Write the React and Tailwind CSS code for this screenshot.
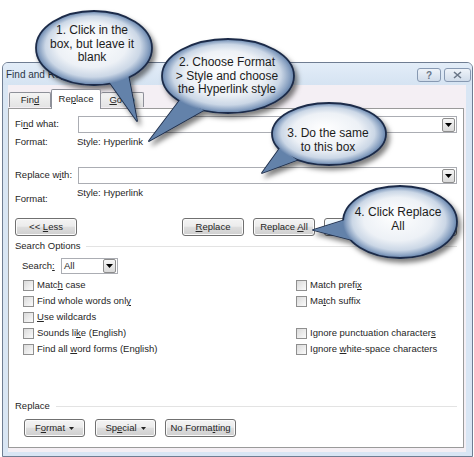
import React from 'react'

const bubbles = [
    { id: 'b1', cx: 94, cy: 48, rx: 58, ry: 37, tail: '108,80 128,74 137,121', tx: 92, y0: 34, lines: ['1. Click in the', 'box, but leave it', 'blank'] },
    { id: 'b2', cx: 228, cy: 76, rx: 66, ry: 37, tail: '180,100 204,110 149,141', tx: 227, y0: 66, lines: ['2. Choose Format', '> Style and choose', 'the Hyperlink style'] },
    { id: 'b3', cx: 329, cy: 134, rx: 57, ry: 31, tail: '280,148 297,160 262,173', tx: 328, y0: 137, lines: ['3. Do the same', 'to this box'] },
    { id: 'b4', cx: 400, cy: 222, rx: 57, ry: 36, tail: '348,219 352,240 313,230', tx: 398, y0: 216, lines: ['4. Click Replace', 'All'] },
]

function Callouts() {
    return (
        <svg className="absolute inset-0 pointer-events-none" width="474" height="457" viewBox="0 0 474 457">
            <defs>
                <filter id="shade" x="-20%" y="-20%" width="150%" height="150%">
                    <feDropShadow dx="3" dy="4" stdDeviation="2.5" floodColor="#000" floodOpacity="0.5" />
                </filter>
                {bubbles.map(b => (
                    <radialGradient key={b.id} id={`g-${b.id}`} gradientUnits="userSpaceOnUse" cx="0" cy="0" r="1" fx="-0.1" fy="-0.2"
                        gradientTransform={`translate(${b.cx} ${b.cy}) scale(${b.rx} ${b.ry})`}>
                        <stop offset="0" stopColor="#ffffff" />
                        <stop offset="0.6" stopColor="#edf1f6" />
                        <stop offset="0.82" stopColor="#cbd7e6" />
                        <stop offset="0.94" stopColor="#8aa2c2" />
                        <stop offset="1" stopColor="#6482aa" />
                    </radialGradient>
                ))}
            </defs>
            {bubbles.map(b => (
                <g key={b.id}>
                    <g filter="url(#shade)">
                        <polygon points={b.tail} fill={`url(#g-${b.id})`} stroke="#1c2c48" strokeWidth="1.8" strokeLinejoin="round" />
                        <ellipse cx={b.cx} cy={b.cy} rx={b.rx} ry={b.ry} fill={`url(#g-${b.id})`} stroke="#1c2c48" strokeWidth="1.8" />
                        <polygon points={b.tail} fill={`url(#g-${b.id})`} />
                    </g>
                    <text x={b.tx} textAnchor="middle" fontFamily="'Liberation Sans', Arial, sans-serif" fontSize="12" fill="#1c1c1c">
                        {b.lines.map((l, i) => (
                            <tspan key={i} x={b.tx} y={b.y0 + i * 13.5}>{l}</tspan>
                        ))}
                    </text>
                </g>
            ))}
        </svg>
    )
}

function Btn({ children, className = '' }) {
    return (
        <div className={`h-[18px] flex items-center justify-center gap-[4px] rounded-[3px] border border-[#707070]
            bg-[linear-gradient(#f4f4f4_0%,#ececec_45%,#dddddd_52%,#cfcfcf_100%)] shadow-[inset_0_0_0_1px_#fbfbfb] ${className}`}>
            {children}
        </div>
    )
}

function Caret() {
    return (
        <svg width="5" height="3" viewBox="0 0 5 3"><path d="M0 0h5L2.5 3z" fill="#222" /></svg>
    )
}

function DropBtn() {
    return (
        <div className="w-[13px] h-[14px] flex items-center justify-center border border-[#8d8d8d] rounded-[2px] bg-[linear-gradient(#f6f6f6,#d9d9d9)]">
            <svg width="7" height="4" viewBox="0 0 7 4"><path d="M0 0h7L3.5 4z" fill="#000" /></svg>
        </div>
    )
}

function Check({ children }) {
    return (
        <div className="flex items-center h-[16px] gap-[3px]">
            <div className="w-[11px] h-[11px] border border-[#8f8f8f] bg-[linear-gradient(135deg,#dadada,#fbfbfb)]" />
            <span>{children}</span>
        </div>
    )
}

export default function App() {
    return (
        <div className="relative w-[474px] h-[457px] overflow-hidden bg-white pt-[62px] pl-[2px] pr-[1px] font-['Liberation_Sans',Arial,sans-serif] text-[9.5px] text-[#262626]">
            <div className="w-[471px] h-[395px] flex flex-col border border-[#6f7d92] rounded-t-[6px] bg-[#d9e6f4]">
                {/* title bar */}
                <div className="h-[22px] flex items-center justify-between pl-[3px] pr-[1px] bg-[linear-gradient(#e3edf8,#d5e3f2)] rounded-t-[5px]">
                    <span className="text-[10px] text-[#2a3646]">Find and Replace</span>
                    <div className="flex gap-[3px] pt-[2px]">
                        <div className="w-[24px] h-[14px] flex items-center justify-center rounded-[3px] border border-[#8799b2] bg-[linear-gradient(#eef3f9,#d0dcea)] text-[10px] font-bold text-[#6a7687]">?</div>
                        <div className="w-[27px] h-[14px] flex items-center justify-center rounded-[3px] border border-[#8799b2] bg-[linear-gradient(#eef3f9,#d0dcea)]">
                            <svg width="9" height="8" viewBox="0 0 9 8"><path d="M1 1l7 6M8 1L1 7" stroke="#6a7687" strokeWidth="1.6" /></svg>
                        </div>
                    </div>
                </div>
                {/* client */}
                <div className="flex-1 ml-[5px] mr-[6px] bg-[#f4eff4] pt-[4px] flex flex-col">
                    <div className="flex items-end h-[19px] ml-px">
                        <div className="w-[42px] h-[15px] mb-px flex items-center justify-center border border-b-0 border-[#8e9099] rounded-t-[2px] bg-[linear-gradient(#f4f4f4,#e4e4e4)]">
                            <span>Fin<u>d</u></span>
                        </div>
                        <div className="relative z-10 -mb-px w-[50px] h-[20px] flex items-center justify-center border border-b-0 border-[#8e9099] rounded-t-[2px] bg-white">
                            <span>Re<u>p</u>lace</span>
                        </div>
                        <div className="w-[43px] h-[15px] mb-px flex items-center justify-center border border-b-0 border-l-0 border-[#8e9099] rounded-t-[2px] bg-[linear-gradient(#f4f4f4,#e4e4e4)]">
                            <span><u>G</u>o To</span>
                        </div>
                    </div>
                    {/* panel */}
                    <div className="w-[456px] h-[340px] border border-[#9a9a9a] bg-white pt-[7px] px-[6px] flex flex-col">
                        <div className="flex items-center h-[17px]">
                            <span className="w-[63px]">Fi<u>n</u>d what:</span>
                            <div className="flex-1 h-[17px] border border-[#abadb3] bg-white flex justify-end items-center pr-px"><DropBtn /></div>
                        </div>
                        <div className="flex items-center h-[14px] mt-[2px]">
                            <span className="w-[62px]">Format:</span>
                            <span>Style: Hyperlink</span>
                        </div>
                        <div className="flex items-center h-[17px] mt-[18px]">
                            <span className="w-[63px]">Replace w<u>i</u>th:</span>
                            <div className="flex-1 h-[17px] border border-[#abadb3] bg-white flex justify-end items-center pr-px"><DropBtn /></div>
                        </div>
                        <div className="flex h-[20px] mt-px">
                            <span className="w-[62px] pt-[7px]">Format:</span>
                            <span className="pt-px">Style: Hyperlink</span>
                        </div>
                        <div className="flex justify-between mt-[13px]">
                            <Btn className="w-[62px]"><span>&lt;&lt; <u>L</u>ess</span></Btn>
                            <div className="flex gap-[9px]">
                                <Btn className="w-[62px]"><span><u>R</u>eplace</span></Btn>
                                <Btn className="w-[62px]"><span>Replace <u>A</u>ll</span></Btn>
                                <Btn className="w-[62px] border-[#3c7fb1] bg-[linear-gradient(#f4fbff,#dcf0fc)] shadow-[inset_0_0_0_1px_#9fd3f2]"><span><u>F</u>ind Next</span></Btn>
                                <Btn className="w-[62px]"><span>Cancel</span></Btn>
                            </div>
                        </div>
                        <div className="flex items-center h-[12px] mt-[4px]">
                            <span>Search Options</span>
                            <div className="flex-1 ml-[6px] border-t border-[#e3e3e3]" />
                        </div>
                        <div className="flex items-center h-[16px] mt-[6px] pl-[7px]">
                            <span className="w-[39px]">Search<u>:</u></span>
                            <div className="w-[57px] h-[16px] border border-[#abadb3] bg-white flex items-center justify-between pl-[2px] pr-px">
                                <span>All</span>
                                <DropBtn />
                            </div>
                        </div>
                        <div className="grid grid-cols-[273px_1fr] mt-[3px] ml-[8px]">
                            <div className="flex flex-col">
                                <Check>Matc<u>h</u> case</Check>
                                <Check>Find whole words onl<u>y</u></Check>
                                <Check><u>U</u>se wildcards</Check>
                                <Check>Sounds li<u>k</u>e (English)</Check>
                                <Check>Find all <u>w</u>ord forms (English)</Check>
                            </div>
                            <div className="flex flex-col">
                                <Check>Match prefi<u>x</u></Check>
                                <Check>Ma<u>t</u>ch suffix</Check>
                                <div className="h-[16px]" />
                                <Check>Ignore punctuation character<u>s</u></Check>
                                <Check>Ignore <u>w</u>hite-space characters</Check>
                            </div>
                        </div>
                        <div className="flex items-center h-[12px] mt-[43px]">
                            <span>Replace</span>
                            <div className="flex-1 ml-[6px] border-t border-[#e3e3e3]" />
                        </div>
                        <div className="flex mt-[7px] pl-[9px]">
                            <Btn className="w-[61px]"><span>F<u>o</u>rmat</span><Caret /></Btn>
                            <Btn className="w-[61px] ml-[10px]"><span>Sp<u>e</u>cial</span><Caret /></Btn>
                            <Btn className="w-[71px] ml-[9px]"><span>No Forma<u>t</u>ting</span></Btn>
                        </div>
                    </div>
                </div>
                <div className="h-[4px]" />
            </div>
            <Callouts />
        </div>
    )
}
